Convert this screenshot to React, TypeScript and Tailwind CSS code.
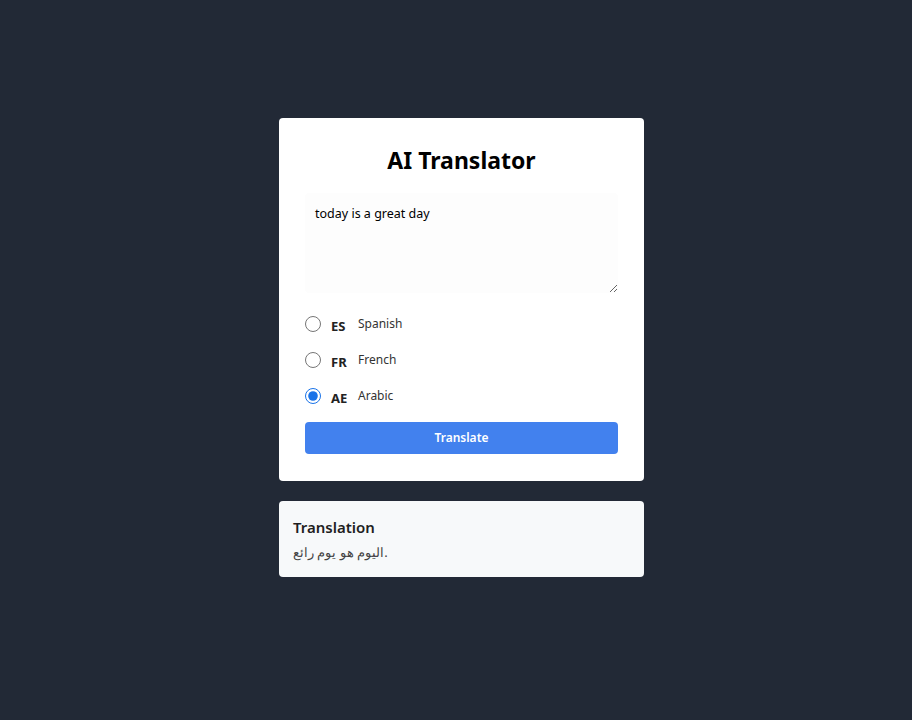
import { useState } from 'react';

const languages = [
  { code: 'es', flag: 'ES', label: 'Spanish' },
  { code: 'fr', flag: 'FR', label: 'French' },
  { code: 'ar', flag: 'AE', label: 'Arabic' },
];

export default function App() {
  const [text, setText] = useState('today is a great day');
  const [lang, setLang] = useState('ar');

  return (
    <div
      className="flex min-h-screen flex-col items-center bg-[#222936] pl-[11px] pt-[118px]"
      style={{ fontFamily: '"Noto Sans", "Open Sans", sans-serif' }}
    >
      {/* Translator form */}
      <div className="w-[365px] rounded bg-white px-[26px] pb-[27px] pt-[26px]">
        <h1 className="text-center text-[23px] font-bold leading-[32px] text-black">AI Translator</h1>
        <textarea
          value={text}
          onChange={(e) => setText(e.target.value)}
          className="mt-[17px] block h-[100px] w-full resize-y rounded bg-[#fdfdfd] px-[10px] pb-[10px] pt-[12px] text-[12.5px] text-black outline-none"
        />
        <div className="mt-[22px] flex flex-col gap-[18px]">
          {languages.map((l) => (
            <label key={l.code} className="flex h-[18px] items-center">
              <input
                type="radio"
                name="lang"
                checked={lang === l.code}
                onChange={() => setLang(l.code)}
                className="m-0 h-4 w-4 accent-[#1a73e8]"
              />
              <span className="ml-[10px] mt-[5px] w-[27px] text-[13px] font-bold text-[#222]">{l.flag}</span>
              <span className="text-[12px] text-[#333]">{l.label}</span>
            </label>
          ))}
        </div>
        <button className="mt-[17px] block h-[32px] w-full rounded-sm bg-[#4281ee] text-[12px] font-semibold text-white">
          Translate
        </button>
      </div>

      {/* Result */}
      <div className="mt-[20px] w-[365px] rounded bg-[#f7f9fa] px-[14px] pb-[16px] pt-[16px]">
        <h2 className="text-[15px] font-semibold leading-[20px] text-[#1f1f1f]">Translation</h2>
        <p className="mt-[6px] text-left text-[13px] leading-[18px] text-[#444]">اليوم هو يوم رائع.</p>
      </div>
    </div>
  );
}
